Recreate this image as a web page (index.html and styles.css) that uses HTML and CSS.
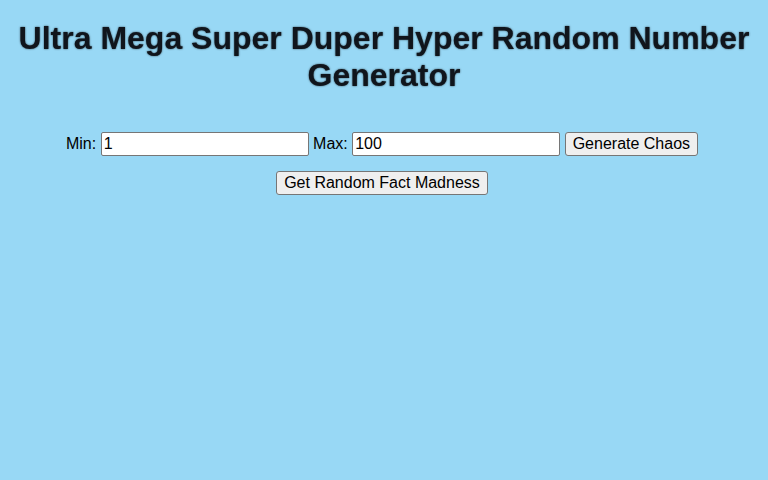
FILE: index.html
```html
<!DOCTYPE html>
<html>
<head>
<title>Random Number Generator</title>
<link rel="stylesheet" href="styles.css">
</head>
<body>

<div id="container">
    <h1>Ultra Mega Super Duper Hyper Random Number Generator</h1>

    <div class="controls">
        <label for="min">Min:</label>
        <input type="number" id="min" value="1">
        <label for="max">Max:</label>
        <input type="number" id="max" value="100">
        <button id="generate">Generate Chaos</button>
    </div>

    <div class="controls">
        <button id="fact">Get Random Fact Madness</button>
    </div>

    <div id="result"></div>
</div>

</body>
</html>
```

FILE: styles.css
```css
/* Basic styling for the page */
body {
    margin: 0;
    background-color: #98d8f5;
    font-family: "Liberation Sans", Arial, sans-serif;
    font-size: 16px;
    color: #000;
}

#container {
    padding: 20px 8px;
    text-align: center;
}

/* fuzzy title, a bit of glow plus blur */
h1 {
    margin: 0 0 38px;
    font-size: 32px;
    line-height: 37px;
    color: #10151c;
    text-shadow: 0 0 2px rgba(0, 0, 0, 0.7);
    filter: blur(0.6px);
}

.controls {
    margin-bottom: 15px;
    padding-right: 4px;
}

input[type="number"] {
    width: 208px;
    height: 24px;
    box-sizing: border-box;
    padding: 2px 2px;
    border: 1px solid #767676;
    border-radius: 2px;
    font-family: inherit;
    font-size: 16px;
    -moz-appearance: textfield;
}

input[type="number"]::-webkit-inner-spin-button,
input[type="number"]::-webkit-outer-spin-button {
    -webkit-appearance: none;
}

button {
    height: 24px;
    padding: 1px 7px;
    background-color: #efefef;
    border: 1px solid #767676;
    border-radius: 3px;
    font-family: inherit;
    font-size: 16px;
    color: #000;
    cursor: pointer;
}
```
